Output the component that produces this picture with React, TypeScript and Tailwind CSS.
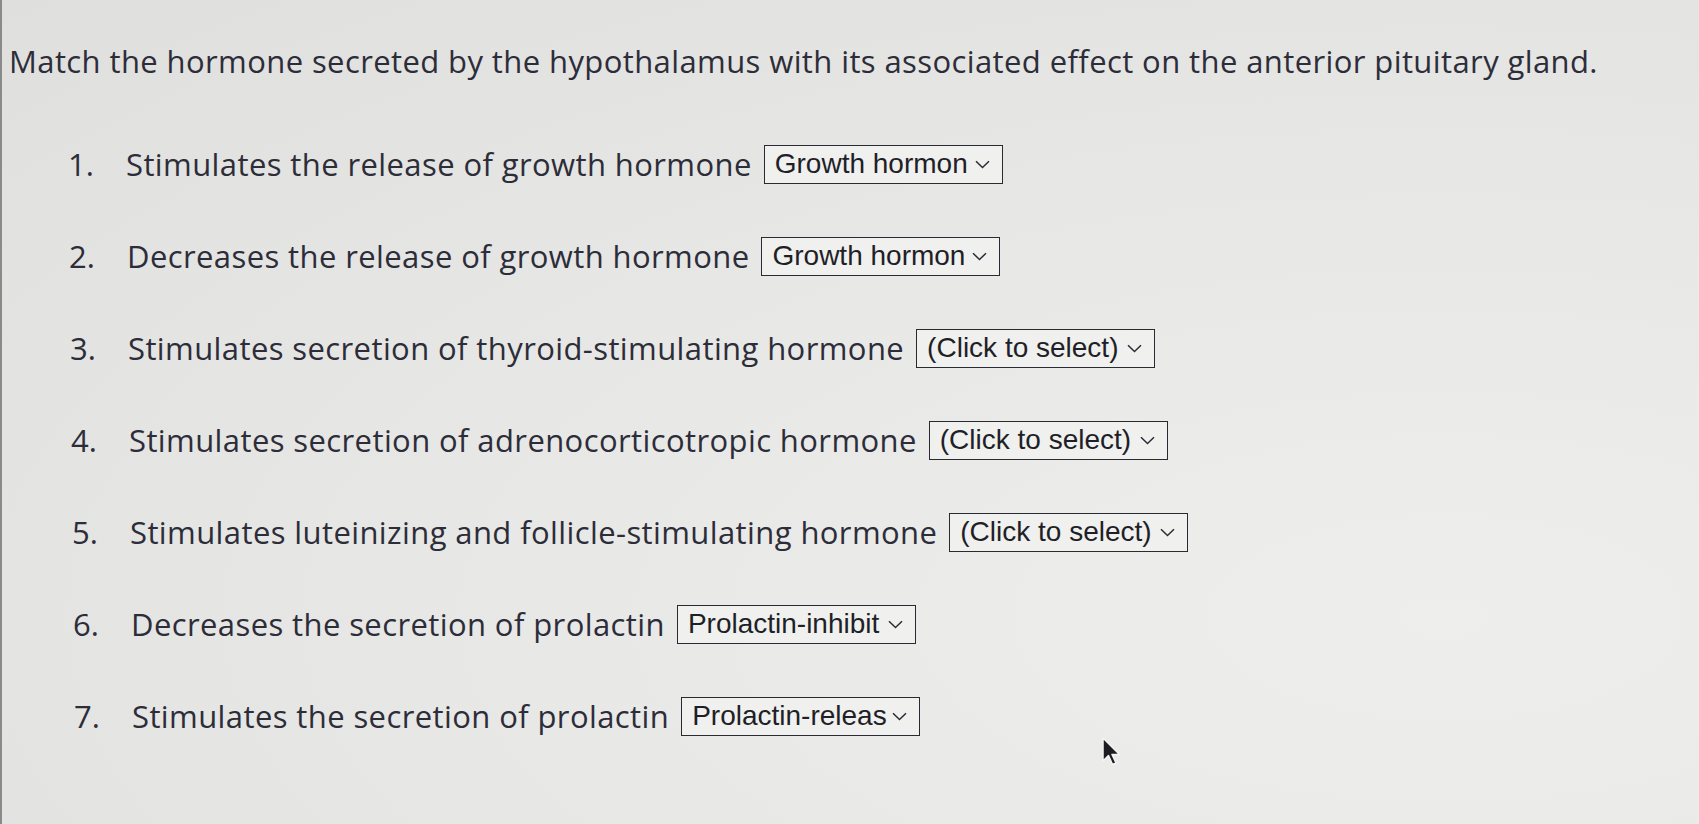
import React from 'react';

type Item = {
  prompt: string;
  choice: string;
  offset: string;
};

const items: Item[] = [
  { prompt: 'Stimulates the release of growth hormone', choice: 'Growth hormon', offset: 'pl-[66px]' },
  { prompt: 'Decreases the release of growth hormone', choice: 'Growth hormon', offset: 'pl-[67px]' },
  { prompt: 'Stimulates secretion of thyroid-stimulating hormone', choice: '(Click to select)', offset: 'pl-[68px]' },
  { prompt: 'Stimulates secretion of adrenocorticotropic hormone', choice: '(Click to select)', offset: 'pl-[69px]' },
  { prompt: 'Stimulates luteinizing and follicle-stimulating hormone', choice: '(Click to select)', offset: 'pl-[70px]' },
  { prompt: 'Decreases the secretion of prolactin', choice: 'Prolactin-inhibit', offset: 'pl-[71px]' },
  { prompt: 'Stimulates the secretion of prolactin', choice: 'Prolactin-releas', offset: 'pl-[72px]' },
];

function Chevron() {
  return (
    <svg width="15" height="9" viewBox="0 0 15 9" fill="none" className="ml-[6px] shrink-0">
      <path d="M1 1.2 L7.5 7.5 L14 1.2" stroke="#2b2b36" strokeWidth="1.5" />
    </svg>
  );
}

function ChoiceBox({ value }: { value: string }) {
  return (
    <div className="ml-[12px] flex h-[39px] w-[239px] shrink-0 items-center border-[1.5px] border-[#2a2a34] bg-[#f0f0ee] pl-[10px]">
      <span className="w-[194px] shrink-0 whitespace-nowrap font-['Liberation_Sans',Arial,sans-serif] text-[28px] leading-[32px] text-[#1f1f27]">
        {value}
      </span>
      <Chevron />
    </div>
  );
}

function Cursor() {
  return (
    <svg
      width="22"
      height="32"
      viewBox="0 0 22 32"
      className="absolute left-[1098px] top-[736px]"
    >
      <path
        d="M3 2 L3 25 L8.5 19.5 L12.5 28.5 L16 27 L12 18.5 L19.5 18.5 Z"
        fill="#1c1c22"
        stroke="#f4f4f2"
        strokeWidth="1.5"
        strokeLinejoin="round"
      />
    </svg>
  );
}

export default function App() {
  return (
    <div className="relative h-[824px] w-[1699px] overflow-hidden border-l-2 border-[#8a8a8a] bg-[radial-gradient(ellipse_at_85%_75%,#eeeeec_0%,#e8e8e6_45%,#dfdfdd_100%)] font-['Open_Sans',sans-serif] text-[#2d2d3a]">
      <h1 className="pl-[7px] pt-[42px] text-[31px] leading-[38px] tracking-[0.4px]">
        Match the hormone secreted by the hypothalamus with its associated effect on the anterior pituitary gland.
      </h1>

      <ol className="mt-[38px] flex flex-col">
        {items.map((item, i) => (
          <li key={i} className={`flex h-[92px] items-center ${item.offset}`}>
            <span className="w-[58px] shrink-0 text-[31px]">{i + 1}.</span>
            <span className="whitespace-nowrap text-[31px] tracking-[0.4px]">{item.prompt}</span>
            <ChoiceBox value={item.choice} />
          </li>
        ))}
      </ol>

      <Cursor />
    </div>
  );
}
